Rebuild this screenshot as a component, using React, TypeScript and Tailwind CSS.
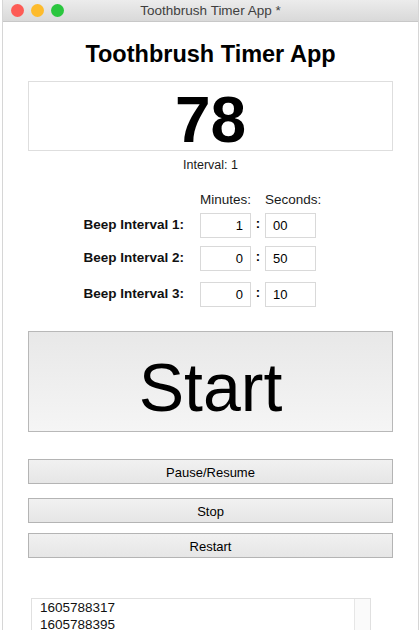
const font = { fontFamily: '"Liberation Sans", Arial, sans-serif' }

const intervals = [
    { label: 'Beep Interval 1:', min: '1', sec: '00', mt: 'mt-[5px]' },
    { label: 'Beep Interval 2:', min: '0', sec: '50', mt: 'mt-[8px]' },
    { label: 'Beep Interval 3:', min: '0', sec: '10', mt: 'mt-[11px]' },
]

function SmallButton({ label, mt }: { label: string, mt: string }) {
    return (
        <button className={`${mt} h-[25px] w-full border border-[#b4b4b4] bg-gradient-to-b from-[#f1f1f1] to-[#e6e6e6] text-[13px] text-black leading-none pt-px`}>
            {label}
        </button>
    )
}

export default function App() {
    return (
        <div className="w-[419px] h-[630px] overflow-hidden bg-white" style={font}>
            <div className="ml-[2px] w-[417px] h-[630px] border-x border-[#d6d6d6] flex flex-col">
                {/* title bar */}
                <div className="relative h-[22px] shrink-0 border-b border-[#c8c8c8] bg-gradient-to-b from-[#ececec] to-[#d9d9d9] flex items-center justify-center">
                    <div className="absolute left-[8px] top-[4px] flex gap-[7px]">
                        <span className="w-[13px] h-[13px] rounded-full bg-[#fd5b55]"></span>
                        <span className="w-[13px] h-[13px] rounded-full bg-[#fdbb2c]"></span>
                        <span className="w-[13px] h-[13px] rounded-full bg-[#2ac63e]"></span>
                    </div>
                    <span className="text-[13.5px] text-[#3f3f3f] leading-none">Toothbrush Timer App *</span>
                </div>

                <div className="px-[25px] flex flex-col">
                    <h1 className="mt-[18px] text-center text-[23.5px] font-bold leading-[28px] text-black">
                        Toothbrush Timer App
                    </h1>

                    <div className="mt-[13px] h-[70px] border border-[#dedede] flex items-center justify-center pt-[8px]">
                        <span className="text-[64px] font-bold leading-none text-black">78</span>
                    </div>

                    <p className="mt-[6px] text-center text-[12.5px] leading-[16px] text-[#1a1a1a]">Interval: 1</p>

                    <div className="mt-[19px] flex leading-[16px] text-[13.5px] text-[#1a1a1a]">
                        <span className="ml-[172px] w-[65px]">Minutes:</span>
                        <span>Seconds:</span>
                    </div>

                    {intervals.map(row => (
                        <div key={row.label} className={`${row.mt} flex items-center h-[25px]`}>
                            <span className="w-[157px] pr-px text-right text-[13.5px] font-bold text-[#111]">{row.label}</span>
                            <div className="ml-[15px] w-[51px] h-[25px] border border-[#d9d9d9] flex items-center justify-end pr-[7px] text-[13px] text-black">
                                {row.min}
                            </div>
                            <span className="w-[14px] text-center text-[13px] font-bold leading-none -mt-[5px]">:</span>
                            <div className="w-[51px] h-[25px] border border-[#d9d9d9] flex items-center pl-[7px] text-[13px] text-black">
                                {row.sec}
                            </div>
                        </div>
                    ))}

                    <button className="mt-[24px] h-[101px] w-full border border-[#b8b8b8] bg-gradient-to-b from-[#e8e8e8] to-[#f5f5f5] flex items-center justify-center pt-[10px]">
                        <span className="text-[68px] leading-none text-black">Start</span>
                    </button>

                    <SmallButton label="Pause/Resume" mt="mt-[27px]" />
                    <SmallButton label="Stop" mt="mt-[14px]" />
                    <SmallButton label="Restart" mt="mt-[10px]" />

                    <div className="mt-[40px] ml-[3px] w-[340px] h-[60px] border border-[#e0e0e0] flex">
                        <div className="flex-1 pl-[8px] text-[13.5px] leading-[17px] text-[#111]">
                            <p>1605788317</p>
                            <p>1605788395</p>
                        </div>
                        <div className="w-[16px] border-l border-[#e6e6e6] bg-[#fafafa]"></div>
                    </div>
                </div>
            </div>
        </div>
    )
}
